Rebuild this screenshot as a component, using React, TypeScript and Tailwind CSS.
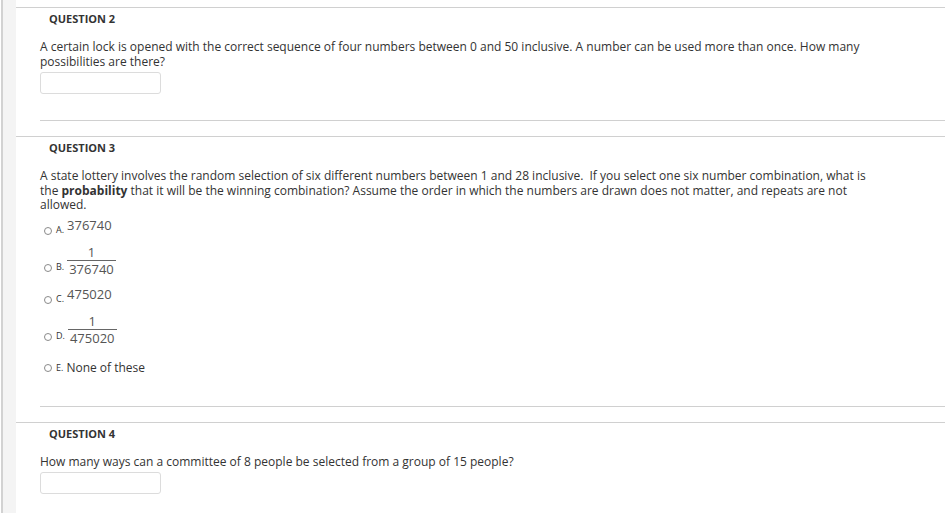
import React from 'react';

const font = { fontFamily: '"Open Sans", "Liberation Sans", sans-serif' };

function Radio() {
  return <span className="block h-[8px] w-[8px] rounded-full border border-[#8a8a8a] bg-white" />;
}

function Fraction({ den }: { den: string }) {
  return (
    <span className="flex flex-col items-center text-[13px] leading-[16px] text-[#555]">
      <span className="px-[1px]">1</span>
      <span className="block w-full border-t border-[#666]" />
      <span className="px-[2px]">{den}</span>
    </span>
  );
}

function Option({ letter, children, radioTop, letterTop }: { letter: string; children: React.ReactNode; radioTop: string; letterTop: string }) {
  return (
    <div className="flex items-start">
      <span className={`ml-[4px] ${radioTop}`}>
        <Radio />
      </span>
      <span className={`ml-[4px] mr-[3px] text-[9px] leading-[9px] text-[#333] ${letterTop}`}>{letter}</span>
      {children}
    </div>
  );
}

function AnswerBox() {
  return <div className="mt-[3px] h-[22px] w-[121px] rounded-[3px] border border-[#dcdcdc] bg-white" />;
}

function Header({ n }: { n: number }) {
  return <div className="mt-[3px] pl-[33px] text-[11px] font-bold leading-[15px] text-[#333]">QUESTION {n}</div>;
}

export default function App() {
  return (
    <div className="flex min-h-[513px] bg-white" style={font}>
      <div className="ml-px w-[15px] shrink-0 border-l-2 border-[#d2d2d2] bg-[#f4f4f4]" />
      <div className="flex-1 pt-[7px]">
        {/* question 2 */}
        <section className="border-t border-[#d0d0d0]">
          <Header n={2} />
          <div className="pl-[24px]">
            <p className="mt-[14px] max-w-[835px] text-[12px] leading-[14.5px] text-[#333]">
              A certain lock is opened with the correct sequence of four numbers between 0 and 50 inclusive. A number can be used more than once. How many possibilities are there?
            </p>
            <AnswerBox />
            <div className="mt-[26px] border-t border-[#d0d0d0]" />
          </div>
        </section>

        {/* question 3 */}
        <section className="mt-[15px] border-t border-[#d0d0d0]">
          <Header n={3} />
          <div className="pl-[24px]">
            <p className="mt-[14px] max-w-[835px] text-[12px] leading-[14.5px] text-[#333]">
              A state lottery involves the random selection of six different numbers between 1 and 28 inclusive.&nbsp; If you select one six number combination, what is the <b>probability</b> that it will be the winning combination? Assume the order in which the numbers are drawn does not matter, and repeats are not allowed.
            </p>
            <div className="mt-[4px] flex flex-col">
              <Option letter="A." radioTop="mt-[10px]" letterTop="mt-[8px]">
                <span className="text-[13px] leading-[16px] text-[#555]">376740</span>
              </Option>
              <div className="mt-[9px]">
                <Option letter="B." radioTop="mt-[20px]" letterTop="mt-[18px]">
                  <Fraction den="376740" />
                </Option>
              </div>
              <div className="mt-[9px]">
                <Option letter="C." radioTop="mt-[10px]" letterTop="mt-[8px]">
                  <span className="text-[13px] leading-[16px] text-[#555]">475020</span>
                </Option>
              </div>
              <div className="mt-[9px]">
                <Option letter="D." radioTop="mt-[20px]" letterTop="mt-[18px]">
                  <Fraction den="475020" />
                </Option>
              </div>
              <div className="mt-[14px]">
                <Option letter="E." radioTop="mt-[4px]" letterTop="mt-[3px]">
                  <span className="text-[12px] leading-[16px] text-[#333]">None of these</span>
                </Option>
              </div>
            </div>
            <div className="mt-[30px] border-t border-[#d0d0d0]" />
          </div>
        </section>

        {/* question 4 */}
        <section className="mt-[15px] border-t border-[#d0d0d0]">
          <Header n={4} />
          <div className="pl-[24px]">
            <p className="mt-[14px] text-[12px] leading-[14.5px] text-[#333]">
              How many ways can a committee of 8 people be selected from a group of 15 people?
            </p>
            <AnswerBox />
          </div>
        </section>
      </div>
    </div>
  );
}
